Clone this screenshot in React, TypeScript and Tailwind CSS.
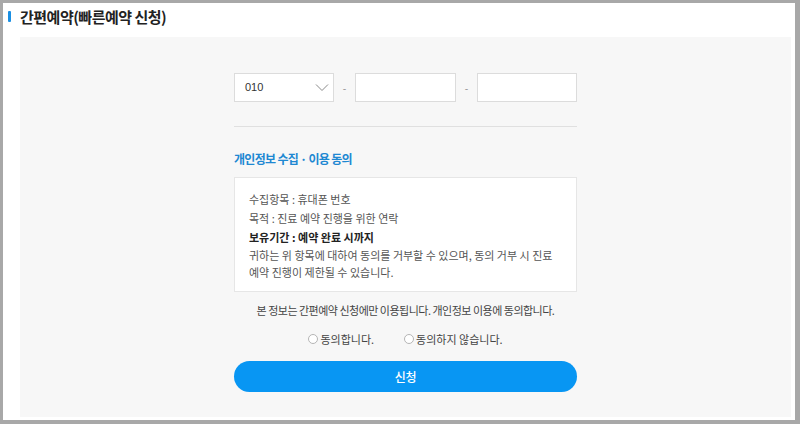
export default function App() {
  return (
    <div className="w-[800px] h-[424px] bg-[#a8a8a8] pt-[3px] pl-[3px] pr-[5px] pb-[4px] font-['Noto_Sans_CJK_KR',sans-serif]">
      <div className="h-full bg-white flex flex-col">
        {/* Title */}
        <div className="h-[34px] flex items-center pl-[5px] pb-[8px] gap-[9px]">
          <div className="w-[3px] h-[11px] bg-[#1a8fe3] rounded-[1px]" />
          <h1 className="text-[15px] font-bold text-[#222] tracking-[-0.5px] leading-none">간편예약(빠른예약 신청)</h1>
        </div>

        {/* Panel */}
        <div className="flex-1 ml-[17px] mr-[4px] mb-[3px] bg-[#f7f7f7] flex justify-center">
          <div className="w-[343px] pt-[36px]">
            {/* Phone */}
            <div className="flex items-center h-[29px]">
              <div className="w-[100px] h-full bg-white border border-[#dcdcdc] flex items-center justify-between pl-[10px] pr-[4px]">
                <span className="text-[11px] text-[#333] font-['Liberation_Sans',sans-serif]">010</span>
                <svg width="14" height="9" viewBox="0 0 14 9" fill="none">
                  <path d="M1 1.5L7 7.5L13 1.5" stroke="#8a8a8a" strokeWidth="1" />
                </svg>
              </div>
              <span className="w-[21px] text-center text-[10px] text-[#888]">-</span>
              <div className="w-[101px] h-full bg-white border border-[#dcdcdc]" />
              <span className="w-[21px] text-center text-[10px] text-[#888]">-</span>
              <div className="w-[100px] h-full bg-white border border-[#dcdcdc]" />
            </div>

            <div className="mt-[24px] border-t border-[#e0e0e0]" />

            <h2 className="mt-[26px] text-[12px] font-bold text-[#1e88d2] tracking-[-0.7px] leading-none">
              개인정보 수집 · 이용 동의
            </h2>

            {/* Info box */}
            <div className="mt-[12px] h-[115px] bg-white border border-[#e6e6e6] pl-[14px] pr-[20px] pt-[12px] text-[11px] text-[#555] break-keep">
              <p className="leading-[19px]">수집항목 : 휴대폰 번호</p>
              <p className="leading-[19px]">목적 : 진료 예약 진행을 위한 연락</p>
              <p className="leading-[19px] font-bold text-[#222]">보유기간 : 예약 완료 시까지</p>
              <p className="leading-[17px]">
                귀하는 위 항목에 대하여 동의를 거부할 수 있으며, 동의 거부 시 진료 예약 진행이 제한될 수 있습니다.
              </p>
            </div>

            <p className="mt-[10px] text-center text-[11px] text-[#444] tracking-[-0.5px] leading-[16px]">
              본 정보는 간편예약 신청에만 이용됩니다. 개인정보 이용에 동의합니다.
            </p>

            {/* Radios */}
            <div className="mt-[13px] flex justify-center gap-[30px] text-[11px] text-[#444] leading-[16px]">
              <label className="flex items-center gap-[2px]">
                <span className="w-[10px] h-[10px] rounded-full border border-[#b5b5b5] bg-white" />
                <span>동의합니다.</span>
              </label>
              <label className="flex items-center gap-[2px]">
                <span className="w-[10px] h-[10px] rounded-full border border-[#b5b5b5] bg-white" />
                <span>동의하지 않습니다.</span>
              </label>
            </div>

            <button className="mt-[14px] w-full h-[31px] rounded-full bg-[#0896f3] text-white text-[12px] font-medium tracking-[-0.3px]">
              신청
            </button>
          </div>
        </div>
      </div>
    </div>
  );
}
